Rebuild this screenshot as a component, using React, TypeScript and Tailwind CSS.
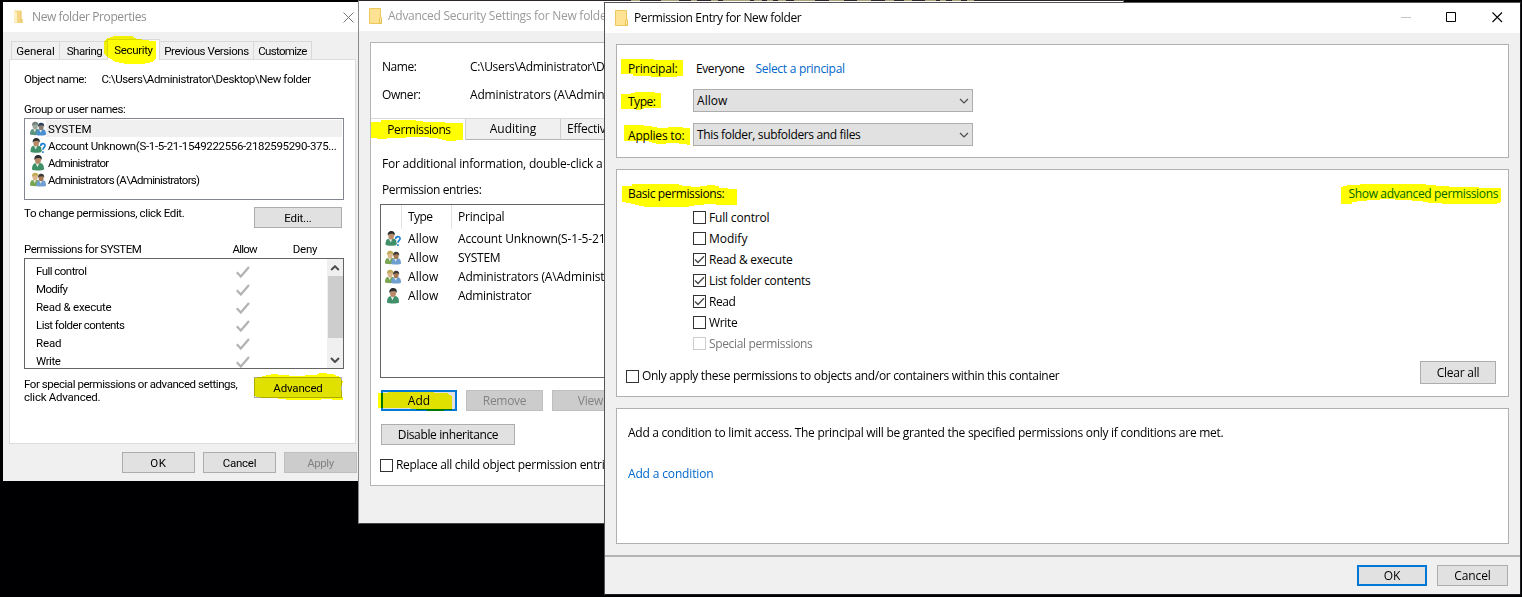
import React, { useLayoutEffect, useRef, useState } from "react";

/** Single line of text tracked so that it fills the given width. */
function T({ w, children, className = "" }: { w: number; children: string; className?: string }) {
  const ref = useRef<HTMLSpanElement>(null);
  const [spacing, setSpacing] = useState(0);
  useLayoutEffect(() => {
    if (ref.current) {
      const natural = ref.current.getBoundingClientRect().width;
      setSpacing((w - 0.6 - natural) / children.length);
    }
  }, []);
  return (
    <span ref={ref} style={{ letterSpacing: `${spacing}px` }} className={`inline-block shrink-0 align-top leading-[16px] whitespace-pre ${className}`}>
      {children}
    </span>
  );
}

function Highlight({ points, className }: { points: string; className: string }) {
  return (
    <svg className={`pointer-events-none absolute mix-blend-multiply ${className}`} shapeRendering="crispEdges">
      <polygon points={points} fill="#ffff00" />
    </svg>
  );
}

function Button({ w, label, className = "", disabled = false, focus = false }: { w: number; label: string; className?: string; disabled?: boolean; focus?: boolean }) {
  const look = disabled
    ? "border border-[#bfbfbf] bg-[#cccccc] text-[#838383]"
    : focus
      ? "border-2 border-[#0078d7] bg-[#e1e1e1] text-black"
      : "border border-[#adadad] bg-[#e1e1e1] text-black";
  return (
    <div className={`flex h-[21px] shrink-0 items-center justify-center ${look} ${className}`}>
      <T w={w}>{label}</T>
    </div>
  );
}

function FolderIcon() {
  return (
    <svg width="14" height="16" viewBox="0 0 14 16" className="shrink-0">
      <path d="M.5.5h11v9h1v6H.5z" fill="#ffe394" stroke="#ecc85c" />
      <path d="M10.500 15V10.200l1-.7 1 .7V15z" fill="#ffe9a8" stroke="#e5bd48" strokeWidth=".8" />
    </svg>
  );
}

function SmallFolderIcon() {
  return (
    <svg width="11" height="14" viewBox="0 0 11 14" className="shrink-0">
      <path d="M1 .5h7.500v8.500h1v4H1z" fill="#f6d684" />
      <path d="M1 .5l3 2V14l-3-2z" fill="#fff0c4" />
      <path d="M7.500 1h1v8h1v4H7z" fill="#efcb72" />
    </svg>
  );
}

function Person({ x, y, hair, skin, shirt, s = 1 }: { x: number; y: number; hair: string; skin: string; shirt: string; s?: number }) {
  return (
    <g transform={`translate(${x} ${y}) scale(${s})`}>
      <path d="M0 14.500C0 10 1.500 8.300 4 8h4c2.600.3 4 2 4 6.500-2 1.400-10 1.400-12 0z" fill={shirt} />
      <path d="M3.500 8.200l2 4L7.500 8z" fill="#e3ebe4" />
      <ellipse cx="6" cy="5" rx="3" ry="3.900" fill={skin} />
      <path d="M2.500 5C1.800 1.500 4 0 6 0s4.600 1.200 3.600 5C9 3.500 8.200 3 6.500 3 5 3.300 3.500 3 2.500 5z" fill={hair} />
    </g>
  );
}

type Kind = "system" | "unknown" | "user" | "group";

function UserIcon({ kind }: { kind: Kind }) {
  return (
    <svg width="16" height="16" viewBox="0 0 16 16" className="shrink-0">
      {kind === "user" && <Person x={2} y={0} hair="#2b2e31" skin="#b98a68" shirt="#3f8f68" />}
      {kind === "unknown" && (
        <>
          <Person x={0.5} y={0} hair="#2b2e31" skin="#b98a68" shirt="#3f8f68" s={0.95} />
          <path d="M10.700 8c0-3.200 4.400-3 4.400-.4 0 1.800-2.200 1.900-2.200 4.200M12.900 13.200v1.800" fill="none" stroke="#fff" strokeWidth="3" />
          <path d="M10.700 8c0-3.200 4.400-3 4.400-.4 0 1.800-2.200 1.900-2.200 4.200M12.900 13.200v1.800" fill="none" stroke="#1c7fd0" strokeWidth="1.600" />
        </>
      )}
      {kind === "system" && (
        <>
          <Person x={0} y={0.8} hair="#77827c" skin="#9aa79c" shirt="#5c9480" s={0.86} />
          <Person x={6.2} y={1.8} hair="#27415c" skin="#8d7a70" shirt="#4a90cf" s={0.82} />
        </>
      )}
      {kind === "group" && (
        <>
          <Person x={0} y={0.8} hair="#c2ab55" skin="#dcb78d" shirt="#78a552" s={0.86} />
          <Person x={6.2} y={1.8} hair="#3d3a38" skin="#a37853" shirt="#6f9ed0" s={0.82} />
        </>
      )}
    </svg>
  );
}

function GreyCheck() {
  return (
    <svg width="14" height="12" viewBox="0 0 14 12" className="block shrink-0">
      <path d="M.8 6.200l4 4.300L13 1" fill="none" stroke="#b2b2b2" strokeWidth="2.200" />
    </svg>
  );
}

function Checkbox({ checked = false, disabled = false }: { checked?: boolean; disabled?: boolean }) {
  return (
    <div className={`flex h-[13px] w-[13px] shrink-0 items-center justify-center border bg-white ${disabled ? "border-[#cccccc]" : "border-[#333333]"}`}>
      {checked && (
        <svg width="11" height="11" viewBox="0 0 11 11">
          <path d="M1 5.500l3 3L10 2.300" fill="none" stroke="#444" strokeWidth="1.300" />
        </svg>
      )}
    </div>
  );
}

function Chevron({ up = false, bold = false }: { up?: boolean; bold?: boolean }) {
  return (
    <svg width="10" height="6" viewBox="0 0 10 6" className="shrink-0">
      <path d={up ? "M1.200 5L5 1.300 8.800 5" : "M1 1l4 4 4-4"} fill="none" stroke="#4d4d4d" strokeWidth={bold ? 2 : 1.2} />
    </svg>
  );
}

const accounts: { kind: Kind; name: string; w: number }[] = [
  { kind: "system", name: "SYSTEM", w: 44 },
  { kind: "unknown", name: "Account Unknown(S-1-5-21-1549222556-2182595290-375...", w: 289 },
  { kind: "user", name: "Administrator", w: 61 },
  { kind: "group", name: "Administrators (A\\Administrators)", w: 152 },
];

const systemRights: [string, number][] = [
  ["Full control", 51],
  ["Modify", 32],
  ["Read & execute", 76],
  ["List folder contents", 89],
  ["Read", 26],
  ["Write", 25],
];

function PropertiesWindow() {
  return (
    <section className="absolute top-[2px] left-[3px] flex h-[479px] w-[356px] flex-col bg-[#f0f0f0] font-[Roboto,sans-serif] text-[11.5px] leading-[16px] text-black">
      <header className="flex h-[30px] shrink-0 items-center bg-white pr-[5px] pl-[10px] font-['Open_Sans',sans-serif] text-[12px] text-[#8f8f8f]">
        <SmallFolderIcon />
        <T w={115} className="ml-[8px]">New folder Properties</T>
        <svg width="11" height="11" viewBox="0 0 11 11" className="ml-auto">
          <path d="M.5.5l10 10M10.500.5l-10 10" stroke="#777" fill="none" />
        </svg>
      </header>

      <div className="z-10 flex h-[27px] shrink-0 items-end pl-[8px]">
        <div className="flex h-[18px] w-[49px] items-center justify-center border border-b-0 border-[#d9d9d9]"><T w={39}>General</T></div>
        <div className="flex h-[18px] w-[47px] items-center justify-center border-t border-[#d9d9d9] pl-[2px]"><T w={36}>Sharing</T></div>
        <div className="-mb-px flex h-[21px] w-[53px] items-center justify-center border border-b-0 border-[#d9d9d9] bg-white pb-px"><T w={39}>Security</T></div>
        <div className="flex h-[18px] w-[94px] items-center justify-center border-t border-r border-[#d9d9d9]"><T w={85}>Previous Versions</T></div>
        <div className="flex h-[18px] w-[58px] items-center justify-center border-t border-r border-[#d9d9d9]"><T w={49}>Customize</T></div>
      </div>

      <div className="ml-[6px] flex h-[385px] w-[347px] shrink-0 flex-col border border-[#dcdcdc] bg-white pl-[14px]">
        <div className="mt-[11px] flex gap-[15px]"><T w={63}>Object name:</T><T w={210}>C:\Users\Administrator\Desktop\New folder</T></div>
        <div className="mt-[14px] flex"><T w={102}>Group or user names:</T></div>
        <div className="mt-px flex h-[82px] w-[320px] shrink-0 flex-col border border-[#828790] pt-px pl-[5px]">
          {accounts.map((a, i) => (
            <div key={a.name} className="flex h-[17px] items-center">
              <UserIcon kind={a.kind} />
              <div className={`flex h-[17px] w-[296px] items-center pl-[2px] ${i === 0 ? "bg-[#f0f0f0]" : ""}`}><T w={a.w}>{a.name}</T></div>
            </div>
          ))}
        </div>
        <div className="mt-[5px] flex h-[23px] w-[318px] justify-between">
          <T w={161}>To change permissions, click Edit.</T>
          <Button w={28} label="Edit..." className="mt-[2px] w-[88px]" />
        </div>
        <div className="mt-[13px] flex">
          <T w={118} className="mr-[91px]">Permissions for SYSTEM</T>
          <T w={25} className="mr-[36px]">Allow</T>
          <T w={25}>Deny</T>
        </div>
        <div className="mt-px flex h-[111px] w-[320px] shrink-0 overflow-hidden border border-[#646464] pl-[11px]">
          <div className="flex w-[291px] flex-col pt-[3px]">
            {systemRights.map(([name, w]) => (
              <div key={name} className="flex h-[18px] shrink-0 items-center">
                <div className="w-[200px]"><T w={w}>{name}</T></div>
                <div className="pt-[2px]"><GreyCheck /></div>
              </div>
            ))}
          </div>
          <div className="flex w-[16px] flex-col items-center bg-[#f0f0f0]">
            <div className="flex h-[17px] items-center"><Chevron up bold /></div>
            <div className="h-[62px] w-[15px] bg-[#cdcdcd]" />
            <div className="mt-auto flex h-[17px] items-center"><Chevron bold /></div>
          </div>
        </div>
        <div className="mt-[7px] flex w-[318px] justify-between">
          <div className="flex flex-col items-start">
            <T w={214} className="-mb-[3px]">For special permissions or advanced settings,</T>
            <T w={77}>click Advanced.</T>
          </div>
          <Button w={50} label="Advanced" className="mt-px w-[88px]" />
        </div>
      </div>

      <footer className="mt-[8px] ml-[119px] flex gap-[8px]">
        <Button w={17} label="OK" className="w-[73px]" />
        <Button w={34} label="Cancel" className="w-[73px]" />
        <Button w={27} label="Apply" className="w-[73px]" disabled />
      </footer>
      <Highlight className="top-[34px] left-[101px] z-20 h-[29px] w-[54px]" points="2,3 10,0 28,0 33,3 42,4 48,5 52,5 52,23 48,26 39,28 23,28 12,26 5,22 0,18 0,6" />
      <Highlight className="top-[371px] left-[251px] z-20 h-[29px] w-[90px]" points="0,5 10,3 19,1 40,3 62,2 66,0 79,1 86,4 89,9 87,15 89,27 79,27 76,26 58,27 36,27 20,25 8,25 0,23" />
    </section>
  );
}

const entries: { kind: Kind; name: string; w: number }[] = [
  { kind: "unknown", name: "Account Unknown(S-1-5-21", w: 148 },
  { kind: "group", name: "SYSTEM", w: 43 },
  { kind: "group", name: "Administrators (A\\Administ", w: 147 },
  { kind: "user", name: "Administrator", w: 74 },
];

function AdvancedWindow() {
  return (
    <section className="absolute top-0 left-[358px] flex h-[524px] w-[766px] flex-col border border-t-[#2c262b] border-r-[#6f6f6f] border-b-[#444444] border-l-[#8a8a8a] bg-[#f0f0f0] font-['Open_Sans',sans-serif] text-[12px] leading-[16px] text-black">
      <svg className="pointer-events-none absolute -top-px left-0 h-px w-[764px]" shapeRendering="crispEdges">
        <path
          d="M272 .5h9M302 .5h18M332 .5h6M352 .5h7M364 .5h27M395 .5h8M408 .5h6M419 .5h8M435 .5h21M470 .5h15M498 .5h14M526 .5h9M545 .5h8M566 .5h11M581 .5h6M593 .5h9M608 .5h7"
          stroke="#a8a178"
        />
      </svg>
      <header className="flex h-[30px] shrink-0 items-center bg-white pl-[10px] text-[#9a9a9a]">
        <FolderIcon />
        <T w={219} className="ml-[5px]">Advanced Security Settings for New folde</T>
      </header>
      <div className="mt-[11px] ml-[11px] flex h-[444px] w-[740px] flex-col border border-[#b5b5b5] bg-white">
        <div className="mt-[16px] flex pl-[11px]"><div className="w-[88px]"><T w={35}>Name:</T></div><T w={135}>C:\Users\Administrator\D</T></div>
        <div className="mt-[12px] flex pl-[11px]"><div className="w-[88px]"><T w={39}>Owner:</T></div><T w={135}>Administrators (A\Admin</T></div>
        <div className="mt-[15px] flex h-[22px] shrink-0 border-t border-[#d9d9d9]">
          <div className="flex w-[94px] items-center justify-center pl-[2px]"><T w={64}>Permissions</T></div>
          <div className="flex w-[96px] items-center justify-center border-x border-b border-[#cfcfcf] border-b-[#b5b5b5] bg-[#f0f0f0]"><T w={47}>Auditing</T></div>
          <div className="flex w-[120px] items-center border-b border-[#b5b5b5] bg-[#f0f0f0] pl-[6px]"><T w={39}>Effectiv</T></div>
        </div>
        <div className="mt-[16px] flex pl-[11px]"><T w={221}>For additional information, double-click a</T></div>
        <div className="mt-[10px] flex pl-[11px]"><T w={100}>Permission entries:</T></div>
        <div className="mt-[6px] ml-[9px] flex h-[174px] w-[700px] shrink-0 flex-col border border-[#646464]">
          <div className="flex h-[24px] shrink-0">
            <div className="w-[21px] border-r border-[#e2e2e2]" />
            <div className="flex w-[50px] items-center border-r border-[#e2e2e2] pl-[6px]"><T w={25}>Type</T></div>
            <div className="flex items-center pl-[6px]"><T w={47}>Principal</T></div>
          </div>
          {entries.map((e) => (
            <div key={e.name} className="flex h-[19px] shrink-0 items-center pl-[4px]">
              <UserIcon kind={e.kind} />
              <div className="ml-[7px] w-[50px]"><T w={31}>Allow</T></div>
              <T w={e.w}>{e.name}</T>
            </div>
          ))}
        </div>
        <div className="mt-[12px] ml-[10px] flex gap-[9px]">
          <Button w={23} label="Add" className="w-[76px]" focus />
          <Button w={44} label="Remove" className="w-[77px]" disabled />
          <Button w={26} label="View" className="w-[77px]" disabled />
        </div>
        <div className="mt-[13px] ml-[10px] flex"><Button w={101} label="Disable inheritance" className="w-[134px]" /></div>
        <div className="mt-[12px] ml-[9px] flex items-center gap-[3px]"><Checkbox /><T w={209}>Replace all child object permission entri</T></div>
      </div>
      <Highlight className="top-[118px] left-[12px] h-[24px] w-[94px]" points="0,3 10,3 10,1 42,1 55,3 92,4 92,21 77,22 65,19 50,18 20,19 12,20 0,19" />
      <Highlight className="top-[389px] left-[19px] h-[24px] w-[78px]" points="0,3 10,3 10,2 54,2 58,3 69,3 74,6 74,20 58,21 40,20 30,18 0,18" />
    </section>
  );
}

const basicRights: { name: string; w: number; checked?: boolean; disabled?: boolean }[] = [
  { name: "Full control", w: 61 },
  { name: "Modify", w: 39 },
  { name: "Read & execute", w: 84, checked: true },
  { name: "List folder contents", w: 102, checked: true },
  { name: "Read", w: 27, checked: true },
  { name: "Write", w: 29 },
  { name: "Special permissions", w: 104, disabled: true },
];

function Combo({ label, w }: { label: string; w: number }) {
  return (
    <div className="flex h-[23px] w-[280px] items-center justify-between border border-[#adadad] bg-[#e1e1e1] px-[3px]">
      <T w={w}>{label}</T>
      <Chevron />
    </div>
  );
}

function EntryWindow() {
  return (
    <section className="absolute top-[2px] left-[604px] flex h-[593px] w-[917px] flex-col border border-[#555555] border-r-[#1c1c1c] border-b-[#1c1c1c] bg-[#f0f0f0] font-['Open_Sans',sans-serif] text-[12px] leading-[16px] text-black">
      <header className="flex h-[30px] shrink-0 items-center bg-white pr-[17px] pl-[10px]">
        <FolderIcon />
        <T w={168} className="ml-[5px]">Permission Entry for New folder</T>
        <svg width="102" height="11" viewBox="0 0 102 11" className="mb-[2px] ml-auto" fill="none">
          <path d="M0 5.500h10" stroke="#c4c4c4" />
          <path d="M45.500.5h9v9h-9z" stroke="#000" />
          <path d="M91.500.5l9.500 9.500M101 .5L91.500 10" stroke="#000" strokeWidth="1.100" />
        </svg>
      </header>

      <div className="mt-[11px] ml-[11px] flex h-[114px] w-[893px] shrink-0 flex-col border border-[#b0b0b0] bg-white pl-[11px]">
        <div className="mt-[16px] flex"><div className="w-[68px]"><T w={50}>Principal:</T></div><T w={49} className="mr-[11px]">Everyone</T><T w={90} className="text-[#0066cc]">Select a principal</T></div>
        <div className="mt-[12px] flex items-center"><div className="w-[65px] pt-[2px]"><T w={28}>Type:</T></div><Combo label="Allow" w={31} /></div>
        <div className="mt-[11px] flex items-center"><div className="w-[65px] pt-[2px]"><T w={57}>Applies to:</T></div><Combo label="This folder, subfolders and files" w={164} /></div>
      </div>

      <div className="mt-[11px] ml-[11px] flex h-[228px] w-[893px] shrink-0 flex-col border border-[#b0b0b0] bg-white pr-[10px] pl-[11px]">
        <div className="mt-[16px] flex justify-between"><T w={97}>Basic permissions:</T><T w={150} className="text-[#0066cc]">Show advanced permissions</T></div>
        <div className="mt-[5px] flex flex-col pl-[65px]">
          {basicRights.map((r) => (
            <div key={r.name} className={`flex h-[21px] items-center gap-[3px] ${r.disabled ? "text-[#777777]" : ""}`}>
              <Checkbox checked={r.checked} disabled={r.disabled} />
              <T w={r.w}>{r.name}</T>
            </div>
          ))}
        </div>
        <div className="mt-[6px] -ml-[2px] flex justify-between">
          <div className="flex h-[32px] items-center gap-[3px]"><Checkbox /><T w={418}>Only apply these permissions to objects and/or containers within this container</T></div>
          <div className="mt-px mr-[2px] flex h-[23px] w-[76px] items-center justify-center border border-[#adadad] bg-[#e1e1e1]"><T w={43}>Clear all</T></div>
        </div>
      </div>

      <div className="mt-[11px] ml-[11px] flex h-[136px] w-[893px] shrink-0 flex-col items-start border border-[#b0b0b0] bg-white pl-[11px]">
        <T w={596} className="mt-[16px]">Add a condition to limit access. The principal will be granted the specified permissions only if conditions are met.</T>
        <T w={86} className="mt-[25px] text-[#0066cc]">Add a condition</T>
      </div>

      <footer className="mt-[11px] flex justify-end gap-[10px] border-t-2 border-[#b4b4b4] pt-[8px] pr-[12px]">
        <Button w={17} label="OK" className="w-[70px]" focus />
        <Button w={37} label="Cancel" className="w-[71px]" />
      </footer>

      <Highlight className="top-[56px] left-[16px] h-[20px] w-[63px]" points="0,0 33,0 33,1 62,1 62,17 56,17 56,18 30,18 30,17 12,17 12,15 0,15" />
      <Highlight className="top-[89px] left-[16px] h-[19px] w-[41px]" points="0,2 8,2 16,0 34,0 34,1 40,1 40,16 24,16 18,18 11,17 0,17" />
      <Highlight className="top-[122px] left-[19px] h-[22px] w-[68px]" points="0,0 15,0 25,1 35,3 52,2 66,3 66,20 59,19 50,18 34,19 23,16 0,16" />
      <Highlight className="top-[180px] left-[17px] h-[26px] w-[117px]" points="0,3 10,3 10,1 55,1 62,3 75,4 88,2 97,3 97,5 115,6 115,22 100,22 88,21 75,22 64,24 24,24 15,22 7,20 0,19" />
      <Highlight className="top-[179px] left-[736px] h-[24px] w-[160px]" points="0,5 8,3 30,2 80,2 100,4 115,5 160,6 160,20 155,22 111,22 90,21 79,19 45,17 20,19 11,20 11,22 0,22" />
    </section>
  );
}

export default function App() {
  return (
    <main className="relative h-[597px] w-[1522px] overflow-hidden bg-[#000003]">
      <PropertiesWindow />
      <AdvancedWindow />
      <EntryWindow />
    </main>
  );
}
